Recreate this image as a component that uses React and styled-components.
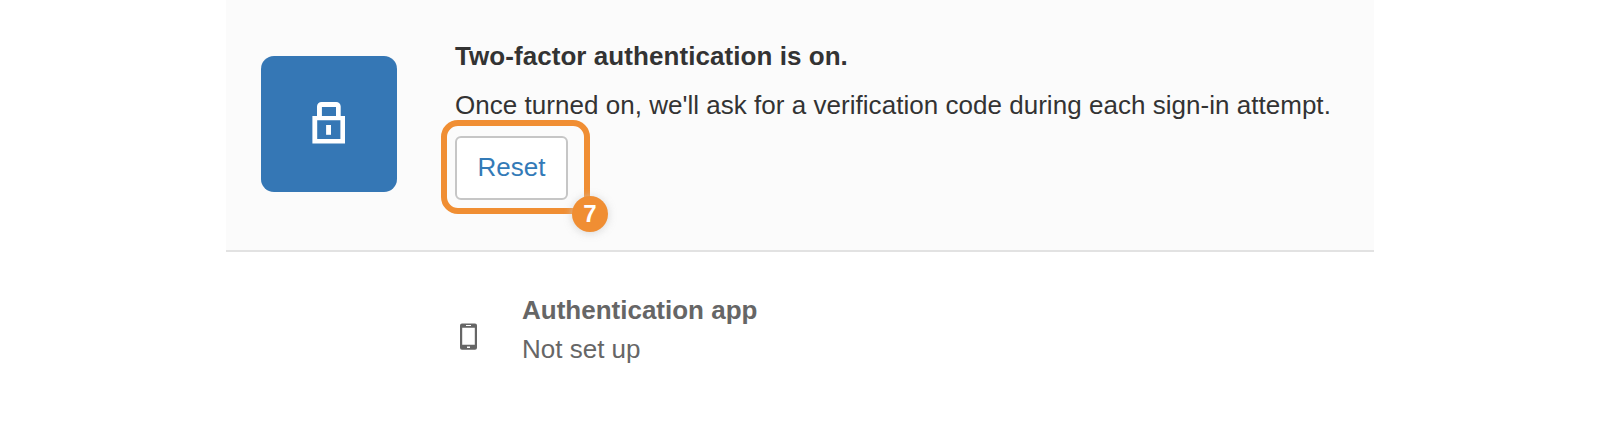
import React from 'react'
import styled, { createGlobalStyle } from 'styled-components'

const GlobalStyle = createGlobalStyle`
  * {
    box-sizing: border-box;
  }

  body {
    margin: 0;
    background: #fff;
    font-family: "Liberation Sans", Arial, Helvetica, sans-serif;
    font-size: 26px;
  }
`

const Settings = styled.main`
  width: 1148px;
  height: 426px;
  margin-left: 226px;
`

const Status = styled.section`
  display: flex;
  align-items: flex-start;
  height: 252px;
  padding: 36px 35px 0;
  background: #fbfbfb;
  border-bottom: 2px solid #e2e2e2;
`

const Tile = styled.div`
  display: flex;
  flex: none;
  width: 136px;
  height: 136px;
  margin: 20px 58px 0 0;
  border-radius: 13px;
  background: #3577b5;
`

const Details = styled.div`
  color: #333;
  letter-spacing: .03px;
  white-space: nowrap;
`

const Title = styled.h2`
  margin: 0 0 9px;
  font-size: 26px;
  line-height: 40px;
  letter-spacing: .06px;
`

const Message = styled.p`
  margin: 0 0 11px;
  line-height: 40px;
`

const Highlighted = styled.div`
  position: relative;
  width: 113px;
`

const ResetButton = styled.button`
  display: block;
  width: 113px;
  height: 64px;
  padding: 0 0 1px;
  border: 2px solid #c6c6c6;
  border-radius: 6px;
  background: #fff;
  color: #337ab7;
  font: inherit;
`

const Ring = styled.div`
  position: absolute;
  top: -16px;
  left: -14px;
  width: 149px;
  height: 94px;
  border: 6px solid #f08e33;
  border-radius: 17px;
  pointer-events: none;
`

const Badge = styled.span`
  position: absolute;
  top: 60px;
  left: 117px;
  width: 36px;
  height: 36px;
  border-radius: 50%;
  background: #f08e33;
  box-shadow: 0 1px 8px rgba(205, 205, 205, .8);
  color: #fff;
  font-size: 24px;
  font-weight: bold;
  line-height: 35px;
  text-align: center;
`

const Method = styled.section`
  display: flex;
  padding: 39px 0 0 233px;
  color: #666;
`

const PhoneIcon = styled.svg`
  flex: none;
  margin: 31px 44px 0 0;
`

const MethodName = styled.h3`
  margin: 0 0 1px;
  font-size: 26px;
  line-height: 38px;
`

const MethodState = styled.p`
  margin: 0;
  line-height: 38px;
`

const Lock = () => (
  <svg width="136" height="136" viewBox="0 0 136 136" role="img" aria-label="Lock">
    <g fill="#fff" fillRule="evenodd">
      <path d="M56 61V50.500a4.500 4.500 0 0 1 4.500-4.500h14.700a4.500 4.500 0 0 1 4.500 4.500V61H75V51H60.900v10z" />
      <path d="M51.400 60H84v27.600H51.400zM56.200 64.300V83h23.200V64.300z" />
      <path d="M65.100 69h4.900v9.800h-4.900z" />
    </g>
  </svg>
)

const Phone = () => (
  <PhoneIcon width="19" height="28" viewBox="0 0 19 28" role="img" aria-label="Phone">
    <path
      fill="#666"
      fillRule="evenodd"
      d="M3 1.600h13a2 2 0 0 1 2 2v22.200a2 2 0 0 1-2 2H3a2 2 0 0 1-2-2V3.600a2 2 0 0 1 2-2zM3.200 5.800v17h12.600v-17zM7 3v1h5V3zM8 24.600v1.400h3v-1.400z"
    />
  </PhoneIcon>
)

const App = () => (
  <>
    <GlobalStyle />
    <Settings>
      <Status>
        <Tile><Lock /></Tile>
        <Details>
          <Title>Two-factor authentication is on.</Title>
          <Message>
            Once turned on, we'll ask for a verification code during each sign-in attempt.
          </Message>
          <Highlighted>
            <ResetButton type="button">Reset</ResetButton>
            <Ring />
            <Badge>7</Badge>
          </Highlighted>
        </Details>
      </Status>
      <Method>
        <Phone />
        <div>
          <MethodName>Authentication app</MethodName>
          <MethodState>Not set up</MethodState>
        </div>
      </Method>
    </Settings>
  </>
)

export default App
